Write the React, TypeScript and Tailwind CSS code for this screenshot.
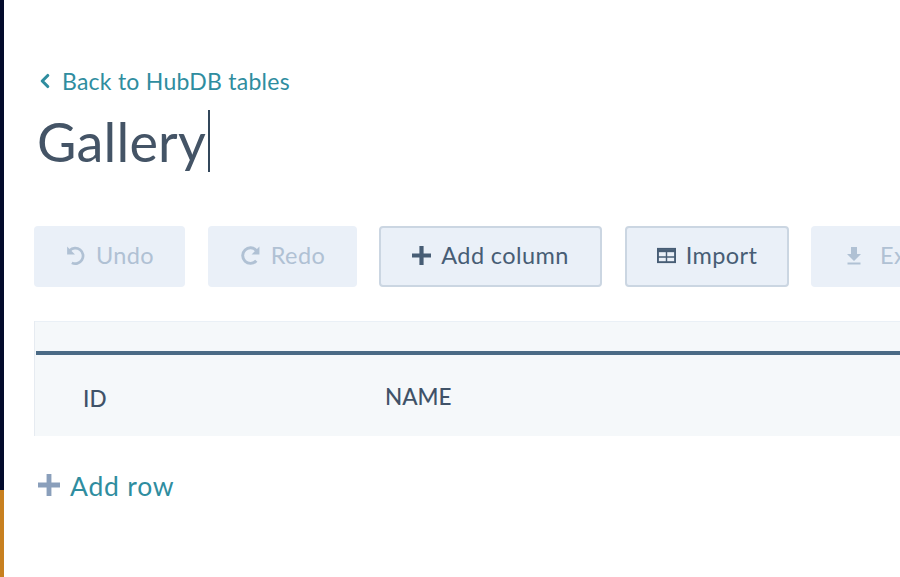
import { ChevronLeft } from 'lucide-react';

const UndoIcon = () => (
  <svg viewBox="0 0 20 20" className="w-[21px] h-[21px]" fill="none">
    <path d="M2 1.5 L2 9 L9.5 9 Z" fill="currentColor" />
    <path d="M4.5 5.2 A7.4 7.4 0 1 1 6.5 17" stroke="currentColor" strokeWidth="2.6" />
  </svg>
);

const RedoIcon = () => (
  <svg viewBox="0 0 20 20" className="w-[21px] h-[21px]" fill="none">
    <path d="M18.5 1.5 L18.5 9 L11 9 Z" fill="currentColor" />
    <path d="M15.5 5.2 A7.4 7.4 0 1 0 15.5 15" stroke="currentColor" strokeWidth="2.8" />
  </svg>
);

const PlusIcon = ({ className }: { className: string }) => (
  <svg viewBox="0 0 20 20" className={className} fill="currentColor">
    <path d="M7.8 0 H12.2 V7.8 H20 V12.2 H12.2 V20 H7.8 V12.2 H0 V7.8 H7.8 Z" />
  </svg>
);

const TableIcon = () => (
  <svg viewBox="0 0 20 16" className="w-[19px] h-[17px]" fill="none" stroke="currentColor">
    <rect x="1" y="1" width="18" height="14" strokeWidth="2" />
    <path d="M1 3 H19" strokeWidth="3" />
    <path d="M1 9.5 H19 M10 4 V15" strokeWidth="1.5" />
  </svg>
);

const DownloadIcon = () => (
  <svg viewBox="0 0 14 20" className="w-[14px] h-[20px]" fill="currentColor">
    <path d="M4 1 H10 V8 H14 L7 15 L0 8 H4 Z" />
    <rect x="0.5" y="16.5" width="13" height="2" />
  </svg>
);

export default function App() {
  return (
    <div className="flex w-[900px] h-[577px] overflow-hidden bg-white font-['Lato','Open_Sans',sans-serif]">
      {/* Sliver of the window behind */}
      <div className="w-[4px] shrink-0 flex flex-col">
        <div className="h-[490px] bg-[#030b2c]" />
        <div className="flex-1 bg-[#c8801f]" />
      </div>

      <div className="flex-1 min-w-0 pl-[30px] pt-[66px]">
        <a className="flex items-center h-[30px] text-[#2f8d9f] text-[23px] tracking-[0.25px]">
          <ChevronLeft className="w-[22px] h-[22px] mr-[6px]" strokeWidth={3.4} />
          Back to HubDB tables
        </a>

        <div className="flex items-center h-[64px] mt-[13px] ml-[3px] text-[#445466] text-[54px] font-normal tracking-[0.2px]">
          Gallery
          <span className="w-[1.5px] h-[62px] ml-[2px] bg-[#33475b]" />
        </div>

        <div className="flex mt-[53px] h-[61px] text-[23.5px] tracking-[0.4px]">
          <button className="flex items-center justify-center shrink-0 gap-[10px] w-[151px] pb-[2px] rounded-[4px] bg-[#eaf0f8] text-[#b0c1d4]">
            <UndoIcon />
            Undo
          </button>
          <button className="flex items-center justify-center shrink-0 gap-[10px] w-[149px] ml-[23px] pb-[2px] rounded-[4px] bg-[#eaf0f8] text-[#b0c1d4]">
            <RedoIcon />
            Redo
          </button>
          <button className="flex items-center justify-center shrink-0 gap-[10px] w-[223px] ml-[22px] pb-[2px] rounded-[4px] border-2 border-[#cbd6e2] bg-[#eaf0f8] text-[#475d75]">
            <PlusIcon className="w-[19px] h-[19px]" />
            Add column
          </button>
          <button className="flex items-center justify-center shrink-0 gap-[10px] w-[164px] ml-[23px] pb-[2px] rounded-[4px] border-2 border-[#cbd6e2] bg-[#eaf0f8] text-[#475d75]">
            <TableIcon />
            Import
          </button>
          <button className="flex items-center shrink-0 gap-[19px] w-[150px] ml-[22px] pl-[36px] pb-[2px] rounded-[4px] bg-[#eaf0f8] text-[#b0c1d4]">
            <DownloadIcon />
            Export
          </button>
        </div>

        <div className="mt-[34px] h-[115px] border-l border-[#e6ebf1] bg-[#f5f8fa]">
          <div className="h-[30px] border-t border-[#eaf0f6]" />
          <div className="h-[4px] ml-[1px] bg-[#4a6a85]" />
          <div className="flex items-center h-[81px] pl-[48px] text-[#3f5268] text-[22.5px] font-medium">
            <span className="w-[302px] mt-[6px]">ID</span>
            <span className="mt-[2px]">NAME</span>
          </div>
        </div>

        <div className="flex items-center h-[34px] mt-[34px] ml-[4px] text-[#2f8d9f] text-[26.5px] tracking-[0.8px]">
          <PlusIcon className="w-[22px] h-[22px] mr-[10px] text-[#8a9fbb] -mt-[4px]" />
          Add row
        </div>
      </div>
    </div>
  );
}
